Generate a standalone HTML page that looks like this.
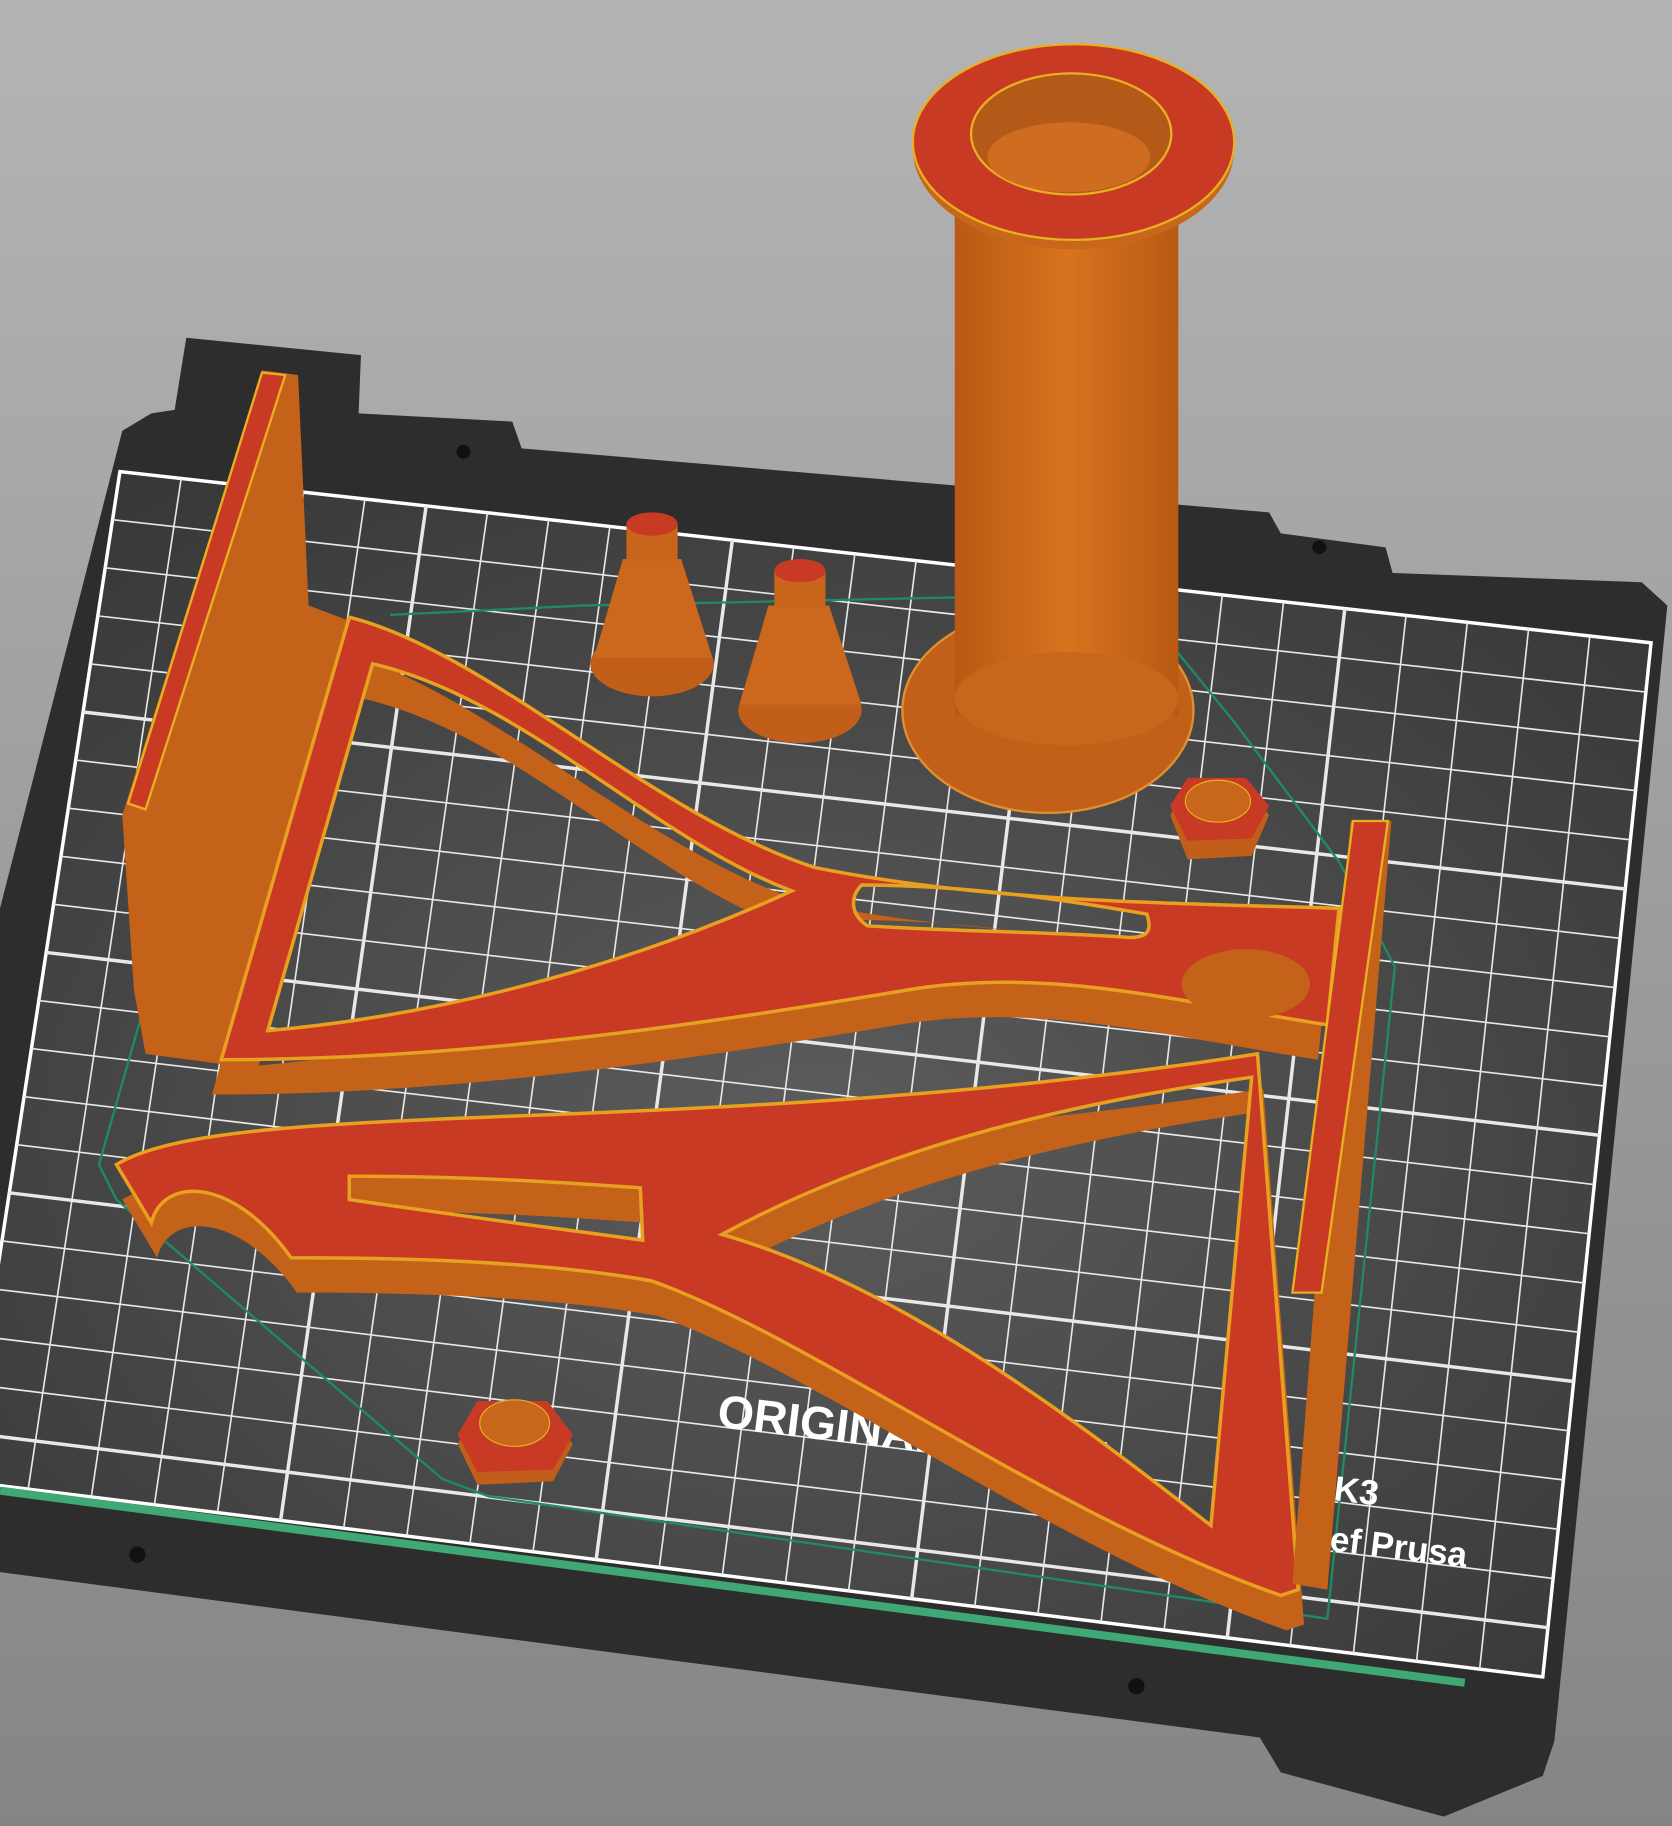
<!DOCTYPE html>
<html><head><meta charset="utf-8"><style>
html,body{margin:0;padding:0;width:1672px;height:1826px;overflow:hidden;background:#9a9a9a}
svg{display:block}
</style></head><body>
<svg id="s" width="1672" height="1826" viewBox="0 0 1436 1568" preserveAspectRatio="none" xmlns="http://www.w3.org/2000/svg">
<defs>
<linearGradient id="bg" x1="0" y1="0" x2="0" y2="1">
<stop offset="0" stop-color="#b4b4b4"/><stop offset="1" stop-color="#858585"/>
</linearGradient>
<radialGradient id="grid" cx="0.5" cy="0.55" r="0.7">
<stop offset="0" stop-color="#5c5c5c"/><stop offset="1" stop-color="#363636"/>
</radialGradient>
<linearGradient id="tube" x1="0" y1="0" x2="1" y2="0">
<stop offset="0" stop-color="#b85a14"/><stop offset="0.5" stop-color="#d8731e"/><stop offset="1" stop-color="#b85a14"/>
</linearGradient>
</defs>
<rect width="1436" height="1568" fill="url(#bg)"/>
<polygon fill="#2d2d2d" points="160,290 310,305 308,355 440,362 448,385 1090,440 1100,458 1190,470 1196,492 1410,500 1432,520 1335,1495 1325,1525 1240,1560 1100,1522 1082,1492 0,1350 0,780 105,370 130,355 150,352"/>
<polygon fill="url(#grid)" stroke="#fff" stroke-width="3" points="103,405 1418,552 1325,1440 -30,1272"/>
<g id="gl" stroke="#e8e8e8" stroke-width="1.6" fill="none"></g>
<line x1="0" y1="1280" x2="1258" y2="1445" stroke="#3fa874" stroke-width="7"/>
<circle cx="398" cy="388" r="6" fill="#111"/><circle cx="1133" cy="470" r="6" fill="#111"/>
<circle cx="118" cy="1335" r="7" fill="#111"/><circle cx="976" cy="1448" r="7" fill="#111"/>
<path d="M335,528 L500,520 L820,513 L995,540 L1060,620 L1150,740 L1198,830 L1140,1390 L420,1285 L380,1270 L100,1030 L85,1000 L125,860" fill="none" stroke="#1f8a66" stroke-width="2"/>
<g fill="#fff" font-family="Liberation Sans, sans-serif" font-weight="bold">
<text x="615" y="1225" font-size="40" transform="rotate(7 615 1225)">ORIGINAL PRUSA</text>
<text x="1120" y="1285" font-size="30" transform="rotate(7 1120 1285)">MK3</text>
<text x="1090" y="1325" font-size="30" transform="rotate(7 1090 1325)">Josef Prusa</text>
</g>
<ellipse cx="900" cy="610" rx="125" ry="88" fill="#c2601a" stroke="#e09030" stroke-width="2"/>
<rect x="820" y="150" width="192" height="465" fill="url(#tube)"/>
<ellipse cx="916" cy="600" rx="96" ry="40" fill="#c8661c"/>
<ellipse cx="922" cy="128" rx="138" ry="86" fill="#c8661c"/>
<ellipse cx="922" cy="122" rx="138" ry="84" fill="#c93a24" stroke="#e8b020" stroke-width="2"/>
<ellipse cx="920" cy="115" rx="86" ry="52" fill="#b45a18" stroke="#e8b020" stroke-width="2"/>
<ellipse cx="918" cy="135" rx="70" ry="30" fill="#cf6c20"/>
<g>
<ellipse cx="560" cy="570" rx="53" ry="28" fill="#c05e1a"/>
<path d="M510,565 L535,480 L585,480 L612,565 Z" fill="#cc681e"/>
<rect x="538" y="450" width="44" height="32" fill="#c8641c"/>
<ellipse cx="560" cy="450" rx="22" ry="10" fill="#c93a24"/>
<ellipse cx="687" cy="610" rx="53" ry="28" fill="#c05e1a"/>
<path d="M635,605 L660,520 L712,520 L740,605 Z" fill="#cc681e"/>
<rect x="665" y="490" width="44" height="32" fill="#c8641c"/>
<ellipse cx="687" cy="490" rx="22" ry="10" fill="#c93a24"/>
</g>
<g>
<polygon points="1005,700 1020,675 1070,675 1090,700 1075,735 1020,738" fill="#c05e1a"/>
<polygon points="1005,692 1020,668 1070,668 1090,692 1075,720 1020,722" fill="#c93a24"/>
<ellipse cx="1046" cy="688" rx="28" ry="18" fill="#c8661c" stroke="#e8b020"/>
<polygon points="393,1240 410,1212 470,1212 492,1240 475,1272 410,1275" fill="#c05e1a"/>
<polygon points="393,1232 410,1203 470,1203 492,1232 475,1262 410,1264" fill="#c93a24"/>
<ellipse cx="442" cy="1222" rx="30" ry="20" fill="#c8661c" stroke="#e8b020"/>
</g>
<g fill-rule="evenodd">
<path d="M105,700 L225,318 L256,322 L265,520 L305,535 L200,915 L125,905 L115,850 Z" fill="#c4621a"/>
<path d="M110,690 L225,320 L245,322 L125,695 Z" fill="#c93a24" stroke="#e8b020" stroke-width="2"/>
<path d="M190,910 L300,530 C420,560 560,700 700,745 C850,775 1000,775 1150,780 L1140,880 C1010,860 900,830 780,850 C600,880 400,910 190,910 Z M230,885 L320,570 C450,600 560,720 680,765 C560,820 400,870 230,885 Z M740,760 C820,760 900,770 985,785 C990,800 985,805 970,805 C900,800 820,800 745,795 C730,785 730,770 740,760 Z" fill="#c4621a" transform="translate(-8,30)"/>
<path d="M190,910 L300,530 C420,560 560,700 700,745 C850,775 1000,775 1150,780 L1140,880 C1010,860 900,830 780,850 C600,880 400,910 190,910 Z M230,885 L320,570 C450,600 560,720 680,765 C560,820 400,870 230,885 Z M740,760 C820,760 900,770 985,785 C990,800 985,805 970,805 C900,800 820,800 745,795 C730,785 730,770 740,760 Z" fill="#c93a24" stroke="#e8a020" stroke-width="3"/>
<ellipse cx="1070" cy="845" rx="55" ry="30" fill="#c4621a"/>
</g>
<g fill-rule="evenodd">
<path d="M100,1000 C200,940 600,980 1080,905 L1115,1365 L1100,1370 C900,1300 700,1150 560,1100 C450,1080 300,1080 250,1080 C200,1010 140,1010 130,1050 Z M620,1060 C750,990 900,950 1075,925 L1040,1310 C900,1200 760,1100 620,1060 Z M300,1010 C400,1010 480,1015 550,1020 L552,1065 C480,1055 400,1045 300,1030 Z" fill="#c4621a" transform="translate(5,30)"/>
<path d="M100,1000 C200,940 600,980 1080,905 L1115,1365 L1100,1370 C900,1300 700,1150 560,1100 C450,1080 300,1080 250,1080 C200,1010 140,1010 130,1050 Z M620,1060 C750,990 900,950 1075,925 L1040,1310 C900,1200 760,1100 620,1060 Z M300,1010 C400,1010 480,1015 550,1020 L552,1065 C480,1055 400,1045 300,1030 Z" fill="#c93a24" stroke="#e8a020" stroke-width="3"/>
<path d="M1110,1360 L1160,705 L1195,705 L1140,1365 Z" fill="#c4621a"/>
<path d="M1110,1110 L1162,705 L1192,705 L1135,1110 Z" fill="#c93a24" stroke="#e8b020" stroke-width="2"/>
</g>
</svg>
<script>
(function(){
var g=document.getElementById('gl'),ns='http://www.w3.org/2000/svg';
var TL=[103,405],TR=[1418,552],BR=[1325,1440],BL=[-30,1272];
function P(u,v){var tx=TL[0]+(TR[0]-TL[0])*u,ty=TL[1]+(TR[1]-TL[1])*u,bx=BL[0]+(BR[0]-BL[0])*u,by=BL[1]+(BR[1]-BL[1])*u;return [tx+(bx-tx)*v,ty+(by-ty)*v];}
function L(a,b,w){var l=document.createElementNS(ns,'line');l.setAttribute('x1',a[0]);l.setAttribute('y1',a[1]);l.setAttribute('x2',b[0]);l.setAttribute('y2',b[1]);if(w)l.setAttribute('stroke-width',w);g.appendChild(l);}
for(var i=1;i<25;i++){var u=i/25;L(P(u,0),P(u,1),i%5==0?3:1.4);}
for(var j=1;j<21;j++){var v=j/21;L(P(0,v),P(1,v),j%5==0?3:1.4);}
})();
</script>
</body></html>
